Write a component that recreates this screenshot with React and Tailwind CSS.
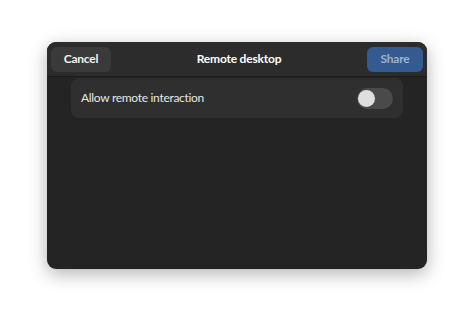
import React from "react"

const Switch = ({ on, onToggle }) => (
  <button
    onClick={onToggle}
    className={`relative w-[36px] h-[21px] rounded-full ${on ? "bg-[#3584e4]" : "bg-[#4a4a4a]"}`}
  >
    <span
      className={`absolute top-[2px] w-[17px] h-[17px] rounded-full bg-[#dedede] ${on ? "left-[17px]" : "left-[1px]"}`}
    ></span>
  </button>
)

const App = () => {
  const [allow, setAllow] = React.useState(false)

  return (
    <div
      className="w-[474px] h-[321px] bg-white pt-[42px] pl-[47px]"
      style={{ fontFamily: "Lato, 'Noto Sans', sans-serif" }}
    >
      <div className="w-[380px] h-[227px] rounded-[9px] bg-[#242424] overflow-hidden shadow-[0_5px_18px_rgba(0,0,0,0.3)] flex flex-col">
        {/* Header */}
        <div className="h-[35px] shrink-0 bg-[#2c2c2c] border-b border-[#1c1c1c] flex items-center justify-between px-[4px]">
          <button className="w-[60px] h-[25px] rounded-[6px] bg-[#3a3a3a] text-[#f2f2f2] text-[12px] tracking-[-0.2px] font-bold">
            Cancel
          </button>
          <h1 className="text-[12px] tracking-[-0.2px] font-bold text-white">Remote desktop</h1>
          <button className="w-[56px] h-[25px] rounded-[6px] bg-[#345b91] text-[#9fb2cc] text-[12px] tracking-[-0.2px] font-bold">
            Share
          </button>
        </div>

        {/* Body */}
        <div className="flex-1 px-[24px] pt-[1px]">
          <div className="h-[40px] rounded-[8px] bg-[#2f2f2f] flex items-center justify-between pl-[10px] pr-[10px]">
            <span className="text-[12px] tracking-[-0.3px] text-[#e6e6e6]">Allow remote interaction</span>
            <Switch on={allow} onToggle={() => setAllow(!allow)} />
          </div>
        </div>
      </div>
    </div>
  )
}

export default App
